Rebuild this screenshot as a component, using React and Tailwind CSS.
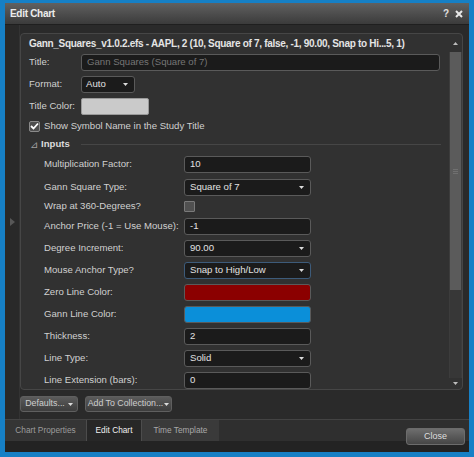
import React from "react";

const FONT = { fontFamily: '"Liberation Sans", Arial, sans-serif' };

function Arrow({ className = "" }) {
  return (
    <svg width="5" height="3" viewBox="0 0 5 3" className={className}>
      <path d="M0 0 L5 0 L2.5 3 Z" fill="#dcdcdc" />
    </svg>
  );
}

function Field({ children, select, border = "border-[#5a5a5a]", bg = "bg-[#1b1b1b]" }) {
  return (
    <div
      className={`w-[127px] h-[17px] rounded-[3px] border ${border} ${bg} flex items-center justify-between pl-[5px] pr-[6px] text-[#e2e2e2] text-[9.6px]`}
    >
      <span>{children}</span>
      {select && <Arrow />}
    </div>
  );
}

function Swatch({ color }) {
  return <div className={`w-[127px] h-[17px] rounded-[3px] border border-[#5a5a5a] ${color}`} />;
}

function Row({ label, h = "h-[22px]", children }) {
  return (
    <div className={`${h} flex items-center pl-[15px]`}>
      <div className="w-[140px] shrink-0 text-[#d0d0d0] text-[9.6px]">{label}</div>
      {children}
    </div>
  );
}

export default function App() {
  return (
    <div className="w-[474px] h-[457px] bg-[#1680c6] pt-[3px] px-[5px] pb-[5px]" style={FONT}>
      <div className="w-full h-full flex flex-col bg-[#2a2a2a]">
        {/* title bar */}
        <div className="h-[22px] shrink-0 flex items-center justify-between pl-[5px] pr-[6px] bg-gradient-to-b from-[#616161] to-[#3b3b3b] border-b border-[#1f1f1f]">
          <span className="font-bold text-[10px] tracking-[-0.3px] text-[#ececec]">Edit Chart</span>
          <div className="flex items-center gap-[6px] text-[#e0e0e0] font-bold">
            <span className="text-[10px]">?</span>
            <svg width="8" height="8" viewBox="0 0 8 8">
              <path d="M1 1 L7 7 M7 1 L1 7" stroke="#e8e8e8" strokeWidth="2" />
            </svg>
          </div>
        </div>

        {/* body */}
        <div className="flex h-[394px] shrink-0">
          {/* left strip */}
          <div className="w-[15px] shrink-0 flex items-center justify-center bg-[#292929] border-r border-[#333]">
            <svg width="5" height="8" viewBox="0 0 5 8">
              <path d="M0 0 L5 4 L0 8 Z" fill="#575757" />
            </svg>
          </div>
          {/* main */}
          <div className="flex-1 flex flex-col pt-[8px] pr-[6px]">
            <div className="h-[357px] rounded-[4px] border border-[#464646] bg-[#313131] flex overflow-hidden">
              <div className="flex-1 min-w-0 pl-[8px] overflow-hidden">
                <div className="h-[18px] flex items-center font-bold text-[10px] tracking-[-0.3px] text-[#e4e4e4] whitespace-nowrap">
                  Gann_Squares_v1.0.2.efs - AAPL, 2 (10, Square of 7, false, -1, 90.00, Snap to Hi...5, 1)
                </div>
                <div className="h-[20px] flex items-center">
                  <div className="w-[52px] shrink-0 text-[#d0d0d0] text-[9.6px]">Title:</div>
                  <div className="w-[359px] h-[17px] rounded-[3px] border border-[#5a5a5a] bg-[#1b1b1b] flex items-center pl-[5px] text-[#767676] text-[9.6px]">
                    Gann Squares (Square of 7)
                  </div>
                </div>
                <div className="h-[24px] flex items-center">
                  <div className="w-[52px] shrink-0 text-[#d0d0d0] text-[9.6px]">Format:</div>
                  <div className="w-[54px] h-[17px] rounded-[3px] border border-[#5a5a5a] bg-[#1b1b1b] flex items-center justify-between pl-[4px] pr-[6px] text-[#e2e2e2] text-[9.6px]">
                    <span>Auto</span>
                    <Arrow />
                  </div>
                </div>
                <div className="h-[20px] flex items-center">
                  <div className="w-[52px] shrink-0 text-[#d0d0d0] text-[9.6px]">Title Color:</div>
                  <div className="w-[68px] h-[17px] rounded-[2px] border border-[#9a9a9a] bg-[#cacaca]" />
                </div>
                <div className="h-[20px] flex items-center gap-[4px]">
                  <div className="w-[11px] h-[11px] rounded-[2px] border border-[#8a8a8a] bg-[#4e4e4e] flex items-center justify-center">
                    <svg width="9" height="8" viewBox="0 0 9 8">
                      <path d="M1 4 L3.5 6.5 L8 1.5" stroke="#ffffff" strokeWidth="1.8" fill="none" />
                    </svg>
                  </div>
                  <span className="text-[#d0d0d0] text-[9.6px]">Show Symbol Name in the Study Title</span>
                </div>
                <div className="h-[17px] flex items-center pl-[1px]">
                  <span className="text-[#a0a0a0] text-[10px] w-[11px] leading-none">⊿</span>
                  <span className="font-bold text-[#dcdcdc] text-[9.6px]">Inputs</span>
                  <div className="ml-[11px] w-[360px] h-[1px] bg-[#464646]" />
                </div>
                <Row label="Multiplication Factor:" h="h-[23px]">
                  <Field>10</Field>
                </Row>
                <Row label="Gann Square Type:">
                  <Field select>Square of 7</Field>
                </Row>
                <Row label="Wrap at 360-Degrees?" h="h-[17px]">
                  <div className="w-[11px] h-[11px] rounded-[1px] border border-[#7a7a7a] bg-[#505050]" />
                </Row>
                <Row label="Anchor Price (-1 = Use Mouse):">
                  <Field>-1</Field>
                </Row>
                <Row label="Degree Increment:">
                  <Field select>90.00</Field>
                </Row>
                <Row label="Mouse Anchor Type?">
                  <Field select border="border-[#3d5b7a]">Snap to High/Low</Field>
                </Row>
                <Row label="Zero Line Color:">
                  <Swatch color="bg-[#8b0000]" />
                </Row>
                <Row label="Gann Line Color:">
                  <Swatch color="bg-[#0b8fd9]" />
                </Row>
                <Row label="Thickness:">
                  <Field>2</Field>
                </Row>
                <Row label="Line Type:">
                  <Field select>Solid</Field>
                </Row>
                <Row label="Line Extension (bars):">
                  <Field>0</Field>
                </Row>
              </div>
              {/* scrollbar */}
              <div className="w-[13px] shrink-0 flex flex-col">
                <div className="h-[18px] flex items-center justify-center">
                  <svg width="5" height="3" viewBox="0 0 5 3">
                    <path d="M0 3 L5 3 L2.5 0 Z" fill="#bdbdbd" />
                  </svg>
                </div>
                <div className="flex-1 bg-[#373737] border-x border-[#3c3c3c] flex flex-col">
                  <div className="h-[238px] bg-[#5b5b5b] flex flex-col items-center justify-center gap-[1px]">
                    <div className="w-[5px] h-[1px] bg-[#707070]" />
                    <div className="w-[5px] h-[1px] bg-[#707070]" />
                    <div className="w-[5px] h-[1px] bg-[#707070]" />
                  </div>
                </div>
                <div className="h-[11px] flex items-center justify-center">
                  <svg width="5" height="3" viewBox="0 0 5 3">
                    <path d="M0 0 L5 0 L2.5 3 Z" fill="#bdbdbd" />
                  </svg>
                </div>
              </div>
            </div>
            {/* buttons */}
            <div className="mt-[6px] flex gap-[7px]">
              <div className="w-[58px] h-[16px] rounded-[3px] border border-[#5f5f5f] bg-gradient-to-b from-[#5b5b5b] to-[#3d3d3d] flex items-center justify-center gap-[3px] text-[#cfcfcf] text-[8.8px]">
                <span>Defaults...</span>
                <Arrow />
              </div>
              <div className="w-[87px] h-[16px] rounded-[3px] border border-[#5f5f5f] bg-gradient-to-b from-[#5b5b5b] to-[#3d3d3d] flex items-center justify-center gap-[1px] text-[#cfcfcf] text-[8.8px]">
                <span>Add To Collection...</span>
                <Arrow />
              </div>
            </div>
          </div>
        </div>

        {/* footer */}
        <div className="flex-1 flex border-t border-[#434343] bg-[linear-gradient(to_bottom,#2f2f2f_0px,#2f2f2f_21px,#232323_21px,#232323_100%)]">
          <div className="flex h-[21px] text-[8.3px]">
            <div className="w-[81px] bg-[#353535] flex items-center justify-center text-[#9c9c9c]">Chart Properties</div>
            <div className="w-[56px] bg-[#272727] border-x border-[#4c4c4c] flex items-center justify-center text-[#f0f0f0]">Edit Chart</div>
            <div className="w-[77px] bg-[#3a3a3a] flex items-center justify-center text-[#a8a8a8]">Time Template</div>
          </div>
          <div className="flex-1" />
          <div className="mt-[8px] mr-[4px] w-[59px] h-[17px] rounded-[3px] border border-[#6c6c6c] bg-gradient-to-b from-[#6e6e6e] to-[#464646] flex items-center justify-center text-[#dedede] text-[9px]">
            Close
          </div>
        </div>
      </div>
    </div>
  );
}
